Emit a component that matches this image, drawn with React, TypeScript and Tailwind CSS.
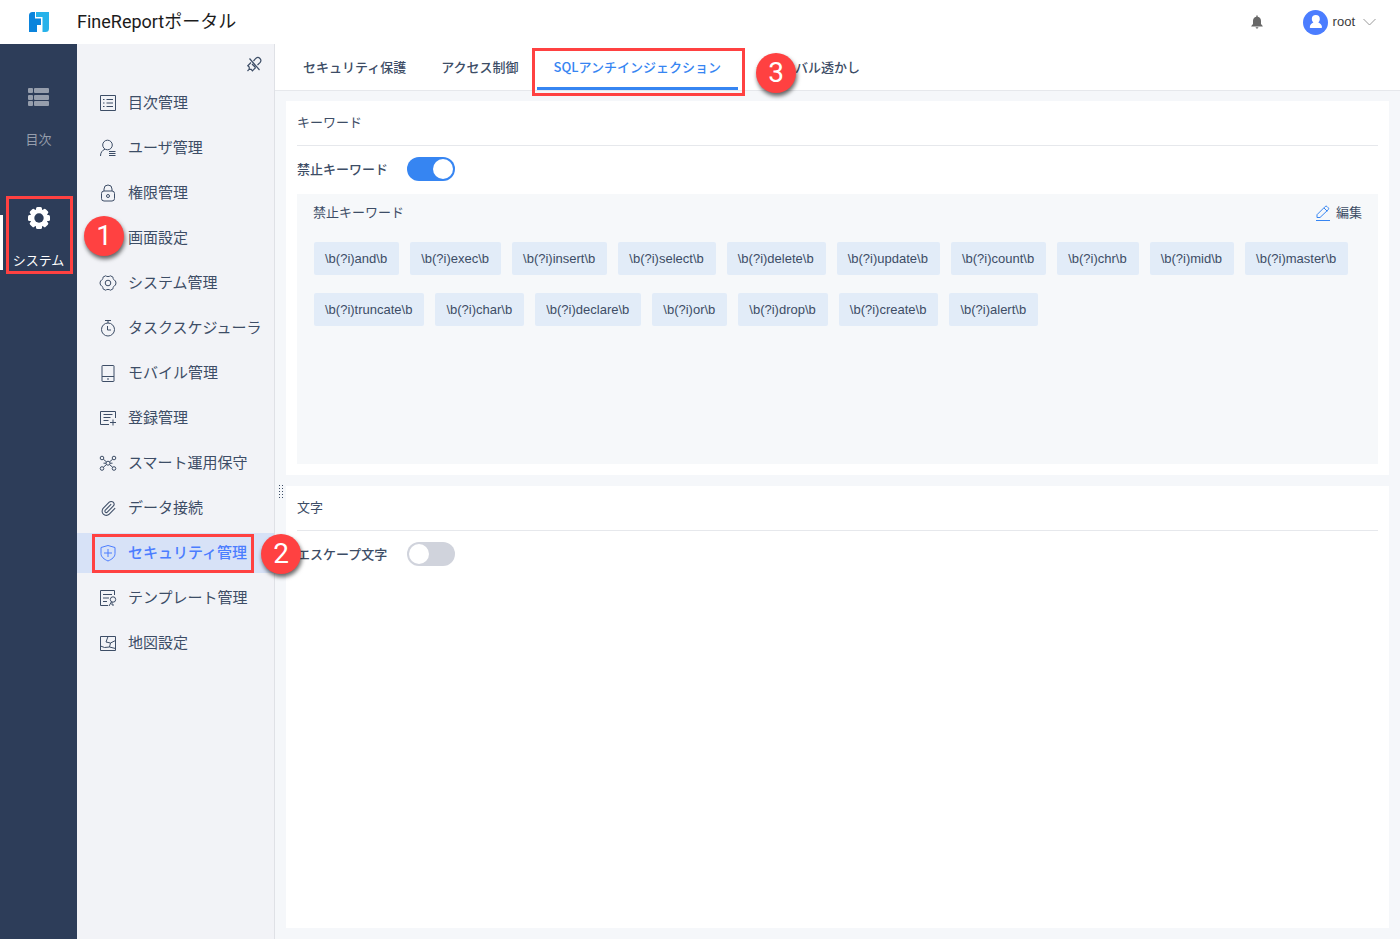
import { useState, type ReactNode } from "react";
import clsx from "clsx";

const keywords = [
  "and",
  "exec",
  "insert",
  "select",
  "delete",
  "update",
  "count",
  "chr",
  "mid",
  "master",
  "truncate",
  "char",
  "declare",
  "or",
  "drop",
  "create",
  "alert",
];

const tabs = ["セキュリティ保護", "アクセス制御", "SQLアンチインジェクション", "グローバル透かし"];

const menuItems: { label: string; icon: ReactNode }[] = [
  {
    label: "目次管理",
    icon: (
      <>
        <path d="M1.5 1.5h15v15h-15z" />
        <path d="M4 5.500h1.500M4 9h1.500M4 12.500h1.500M7.500 5.500h6.500M7.500 9h6.500M7.500 12.500h6.500" />
      </>
    ),
  },
  {
    label: "ユーザ管理",
    icon: (
      <>
        <circle cx="8.5" cy="6" r="4.800" />
        <path d="M6 10.200C3.200 11.200 1.500 13.700 1.500 17M10 12.500h6.500M10 14.500h6.500M10 16.500h6.500" />
      </>
    ),
  },
  {
    label: "権限管理",
    icon: (
      <>
        <rect x="2.500" y="7" width="13" height="10" rx="2.500" />
        <path d="M5 7V5a4 4 0 0 1 8 0v2" />
        <circle cx="9" cy="12" r="1.500" />
      </>
    ),
  },
  {
    label: "画面設定",
    icon: <path d="M1.500 2.500h15v10h-15zM5.500 15.500h7M9 12.500v3" />,
  },
  {
    label: "システム管理",
    icon: (
      <>
        <path d="M6.500 1.800C8 2.800 10 2.800 11.500 1.800L14 3.200C14 5 14.800 6.200 16.400 6.800L17 9l-.6 2.200C14.800 11.800 14 13 14 14.800l-2.500 1.400C10 15.200 8 15.200 6.500 16.200L4 14.800C4 13 3.200 11.800 1.600 11.200L1 9l.6-2.200C3.200 6.200 4 5 4 3.200z" />
        <circle cx="9" cy="9" r="2.800" />
      </>
    ),
  },
  {
    label: "タスクスケジューラ",
    icon: (
      <>
        <circle cx="9" cy="10.500" r="6.500" />
        <path d="M6 1.500h6M9 1.500v2.500M8.500 7v4h3.500" />
      </>
    ),
  },
  {
    label: "モバイル管理",
    icon: (
      <>
        <rect x="3" y="1.500" width="12" height="16" rx="0.500" />
        <path d="M3 12.500h12M8 15h2" />
      </>
    ),
  },
  {
    label: "登録管理",
    icon: (
      <>
        <path d="M10 15.500H1.500v-13h15v6.500" />
        <path d="M4.500 5.500h9M4.500 8.500h7M4.500 11.500h5M11 13.500h6M14 10.500v6" />
      </>
    ),
  },
  {
    label: "スマート運用保守",
    icon: (
      <>
        <circle cx="3" cy="4" r="1.800" />
        <circle cx="15" cy="4" r="1.800" />
        <circle cx="3" cy="14.500" r="1.800" />
        <circle cx="15" cy="14.500" r="1.800" />
        <circle cx="9" cy="9.200" r="2" />
        <path d="M4.300 5.200 7.500 7.900M13.700 5.200 10.500 7.900M4.300 13.300 7.500 10.500M13.700 13.300 10.500 10.500M4.500 9.200H7M11 9.200h2.500" />
      </>
    ),
  },
  {
    label: "データ接続",
    icon: (
      <path
        transform="translate(1 1) scale(0.7)"
        strokeWidth="1.500"
        d="m16 6-8.414 8.586a2 2 0 0 0 2.829 2.829l8.414-8.586a4 4 0 1 0-5.657-5.657l-8.379 8.551a6 6 0 1 0 8.485 8.485l8.379-8.551"
      />
    ),
  },
  {
    label: "セキュリティ管理",
    icon: (
      <>
        <path d="M9 1.500 16 3.500V9.500c0 3.500-3 5.700-7 7.500-4-1.800-7-4-7-7.500V3.500z" />
        <path d="M5 9h8M9 5v8" />
      </>
    ),
  },
  {
    label: "テンプレート管理",
    icon: (
      <>
        <path d="M9 16.500H1.500v-15h14V6" />
        <path d="M4 5.500h9M4 9h6M4 12.500h4" />
        <circle cx="14" cy="10.500" r="2.700" />
        <path d="M12.500 12.700 10 17M13 13v3h2" />
      </>
    ),
  },
  {
    label: "地図設定",
    icon: (
      <path d="M1.500 2.500h15v14h-15zM9 2.500 7 8l4.500 1 5-2.500M11.500 9l-1 4 6 1.500M1.500 12l4 1.500 5-.5" />
    ),
  },
];

function Logo() {
  return (
    <svg width="22" height="22" viewBox="0 0 22 22" aria-hidden>
      <path d="M4.500 1H7v6.500h6V14H9v7H1V4.500A3.500 3.500 0 0 1 4.500 1z" fill="#0b84dc" />
      <path d="M8 1h13v16.500a3.500 3.500 0 0 1-3.500 3.500H14.500V6H8z" fill="#27b2ea" />
    </svg>
  );
}

function ListIcon() {
  return (
    <svg width="22" height="22" viewBox="0 0 22 22" fill="currentColor" aria-hidden>
      {[2, 9, 15].map((y) => (
        <g key={y}>
          <rect x="0" y={y} width="5" height="5" rx="1" />
          <rect x="6" y={y} width="15" height="5" rx="1" />
        </g>
      ))}
    </svg>
  );
}

function GearIcon() {
  return (
    <svg width="22" height="22" viewBox="0 0 22 22" aria-hidden>
      <g fill="currentColor">
        {[0, 45, 90, 135].map((angle) => (
          <rect
            key={angle}
            x="8"
            y="0"
            width="6"
            height="22"
            rx="1.500"
            transform={`rotate(${angle} 11 11)`}
          />
        ))}
        <circle cx="11" cy="11" r="9" />
      </g>
      <circle cx="11" cy="11" r="4.700" fill="#2d3d59" />
    </svg>
  );
}

function UnpinIcon() {
  return (
    <svg
      width="16"
      height="16"
      viewBox="0 0 16 16"
      fill="none"
      stroke="currentColor"
      strokeWidth="1.200"
      aria-hidden
    >
      <path d="M7.500 5 10 2.200a3 3 0 0 1 4.200 4.200L11.500 9M5 6.500 1.800 9.800 3.200 11v2.200l2 .2 1.200 1.400L9.700 11.500M3.500 2.500l10 11.500M6 8l3.500 3.500M2.800 13.600 1.500 15" />
    </svg>
  );
}

function Step({ n, className }: { n: number; className: string }) {
  return (
    <span
      className={clsx(
        "pointer-events-none absolute z-20 flex size-10 items-center justify-center rounded-full bg-[#ff4141] font-[Roboto,sans-serif] text-[28px] leading-none font-normal text-white shadow-[1px_3px_4px_rgba(0,0,0,0.6)]",
        className,
      )}
    >
      {n}
    </span>
  );
}

function Highlight({ className }: { className: string }) {
  return (
    <span
      className={clsx("pointer-events-none absolute z-10 border-3 border-[#ff4141]", className)}
      aria-hidden
    />
  );
}

function SwitchRow({ id, label, on }: { id: string; label: string; on: boolean }) {
  const [checked, setChecked] = useState(on);

  return (
    <div className="mb-0.5 flex h-[46px] items-center">
      <label htmlFor={id} className="w-[110px] pt-0.5 font-medium">
        {label}
      </label>
      <input
        id={id}
        type="checkbox"
        role="switch"
        checked={checked}
        onChange={(e) => setChecked(e.target.checked)}
        className="h-6 w-12 cursor-pointer appearance-none rounded-full bg-[#d0d3dc] p-0.5 before:block before:size-5 before:rounded-full before:bg-white checked:bg-[#3685f2] checked:before:translate-x-6"
      />
    </div>
  );
}

function TopBar() {
  return (
    <header className="flex h-11 shrink-0 items-center bg-white pr-6">
      <div className="flex w-[77px] justify-center">
        <Logo />
      </div>
      <h1 className="font-[Roboto,'Noto_Sans_CJK_JP',sans-serif] text-lg text-[#1c1c1c]">
        FineReportポータル
      </h1>
      <button type="button" aria-label="通知" className="ml-auto text-[#686868]">
        <svg width="14" height="14" viewBox="0 0 14 14" fill="currentColor" aria-hidden>
          <path d="M6.300.5h1.400v1.200C10 2.100 11 4 11 6v3l1.700 2v.5H1.300V11L3 9V6c0-2 1-3.900 3.300-4.300zM5.500 12.300h3L7.700 13.500H6.300z" />
        </svg>
      </button>
      <button type="button" className="ml-[39px] flex items-center text-[13px] text-[#3a3a3a]">
        <svg width="25" height="25" viewBox="0 0 25 25" aria-hidden>
          <circle cx="12.500" cy="12.500" r="12.500" fill="#4b7dff" />
          <path
            d="M12.800 5a4 4 0 0 1 4 4c0 1.500-.6 2.600-1.500 3.400 2 .8 3.500 2.300 3.700 4.600 0 .6-.4 1-1 1H7.800c-.6 0-1-.4-1-1 .2-2.300 1.600-3.800 3.600-4.600A4.200 4.200 0 0 1 8.800 9a4 4 0 0 1 4-4z"
            fill="#fff"
          />
        </svg>
        <span className="ml-[5px]">root</span>
        <svg
          className="ml-2"
          width="13"
          height="8"
          viewBox="0 0 13 8"
          fill="none"
          stroke="#999"
          aria-hidden
        >
          <path d="M.5 1l6 6 6-6" />
        </svg>
      </button>
    </header>
  );
}

function MainNav() {
  return (
    <nav className="flex w-[77px] shrink-0 flex-col gap-[43px] bg-[#2d3d59] pt-[31px] text-[13px]">
      <button
        type="button"
        className="flex h-[78px] flex-col items-center gap-[22px] pt-[11px] leading-5 text-[#969eac]"
      >
        <ListIcon />
        目次
      </button>
      <button
        type="button"
        className="relative flex h-[78px] flex-col items-center gap-[22px] pt-[11px] leading-5 text-white"
      >
        <span className="absolute top-[19px] left-0 h-[55px] w-[3px] bg-white" />
        <GearIcon />
        システム
        <Highlight className="inset-y-0 right-1 left-1.5" />
        <Step n={1} className="top-5 left-[84px]" />
      </button>
    </nav>
  );
}

function SideMenu() {
  const active = "セキュリティ管理";

  return (
    <aside className="w-[198px] shrink-0 border-r border-[#dfe1e6] bg-[#f2f3f7]">
      <div className="flex h-[39px] items-center justify-end pr-3">
        <button type="button" aria-label="固定解除">
          <UnpinIcon />
        </button>
      </div>
      <ul className="flex flex-col gap-[5px]">
        {menuItems.map(({ label, icon }) => (
          <li key={label} className="relative">
            <a
              href="#"
              className={clsx(
                "flex h-10 items-center gap-[11px] pl-[22px] text-[15px] whitespace-nowrap",
                label === active && "bg-[#d7e2f7] font-medium text-[#4b7dff]",
              )}
            >
              <svg
                width="18"
                height="18"
                viewBox="0 0 18 18"
                fill="none"
                stroke="currentColor"
                className="shrink-0"
                aria-hidden
              >
                {icon}
              </svg>
              {label}
            </a>
            {label === active && (
              <>
                <Highlight className="top-px right-5 bottom-0 left-[15px]" />
                <Step n={2} className="top-px left-[184px]" />
              </>
            )}
          </li>
        ))}
      </ul>
    </aside>
  );
}

function Tabs() {
  const [current, setCurrent] = useState(2);

  return (
    <div
      role="tablist"
      className="flex h-[47px] gap-px border-b border-[#e6e8ec] bg-white pl-[11px]"
    >
      {tabs.map((tab, i) => (
        <div key={tab} className="relative flex">
          <button
            type="button"
            role="tab"
            aria-selected={i === current}
            onClick={() => setCurrent(i)}
            className={clsx(
              "border-b-3 px-[17px] pt-[3px] font-['Noto_Sans_CJK_JP',sans-serif] font-medium whitespace-nowrap",
              i === current ? "border-[#3685f2] text-[#3685f2]" : "border-transparent",
            )}
          >
            {tab}
          </button>
          {i === 2 && (
            <>
              <Highlight className="top-1 -right-[7px] -bottom-[6px] -left-[5px]" />
              <Step n={3} className="top-[9px] -right-[58px]" />
            </>
          )}
        </div>
      ))}
    </div>
  );
}

function Card({
  title,
  className,
  children,
}: {
  title: string;
  className?: string;
  children: ReactNode;
}) {
  return (
    <section className={clsx("bg-white px-[11px] pb-[11px]", className)}>
      <h2 className="flex h-[45px] items-center border-b border-[#e6e8ec]">{title}</h2>
      {children}
    </section>
  );
}

export default function App() {
  return (
    <div className="flex min-h-screen flex-col bg-[#f5f7fa] font-['Liberation_Sans','Noto_Sans_CJK_JP',sans-serif] text-[#3d4d66]">
      <TopBar />
      <div className="flex flex-1">
        <MainNav />
        <SideMenu />
        <main className="relative flex min-w-0 flex-1 flex-col text-[13px]">
          <Tabs />
          <div className="absolute inset-y-0 left-[3px] flex items-center" aria-hidden>
            <svg width="6" height="14" viewBox="0 0 6 14" fill="#3d4d66">
              {[0, 3, 6, 9, 12].map((y) => (
                <g key={y}>
                  <rect x="1" y={y} width="1" height="1" />
                  <rect x="4" y={y} width="1" height="1" />
                </g>
              ))}
            </svg>
          </div>
          <div className="flex flex-1 flex-col gap-[11px] px-[11px] pt-[10px] pb-[11px]">
            <Card title="キーワード">
              <SwitchRow id="forbidden-keywords" label="禁止キーワード" on />
              <div className="min-h-[270px] bg-[#f6f8fa] px-4">
                <div className="flex h-12 items-start justify-between pt-[9px]">
                  <h3 className="leading-5">禁止キーワード</h3>
                  <button type="button" className="flex items-center gap-[5px] leading-5">
                    <svg
                      width="16"
                      height="16"
                      viewBox="0 0 16 16"
                      fill="none"
                      stroke="#3685f2"
                      aria-hidden
                    >
                      <path d="M2 12.500V9.700L10.200 1.500a1.300 1.300 0 0 1 1.800 0l1.300 1.300a1.300 1.300 0 0 1 0 1.800L5 12.500zM9 3l3.300 3.300M1 15.500h14" />
                    </svg>
                    編集
                  </button>
                </div>
                <ul className="flex flex-wrap gap-x-[11px] gap-y-[18px] pl-px">
                  {keywords.map((word) => (
                    <li
                      key={word}
                      className="flex h-[33px] items-center rounded-xs bg-[#e2ecf8] pr-3 pl-[11px]"
                    >
                      {`\\b(?i)${word}\\b`}
                    </li>
                  ))}
                </ul>
              </div>
            </Card>
            <Card title="文字" className="flex-1">
              <SwitchRow id="escape-characters" label="エスケープ文字" on={false} />
            </Card>
          </div>
        </main>
      </div>
    </div>
  );
}
